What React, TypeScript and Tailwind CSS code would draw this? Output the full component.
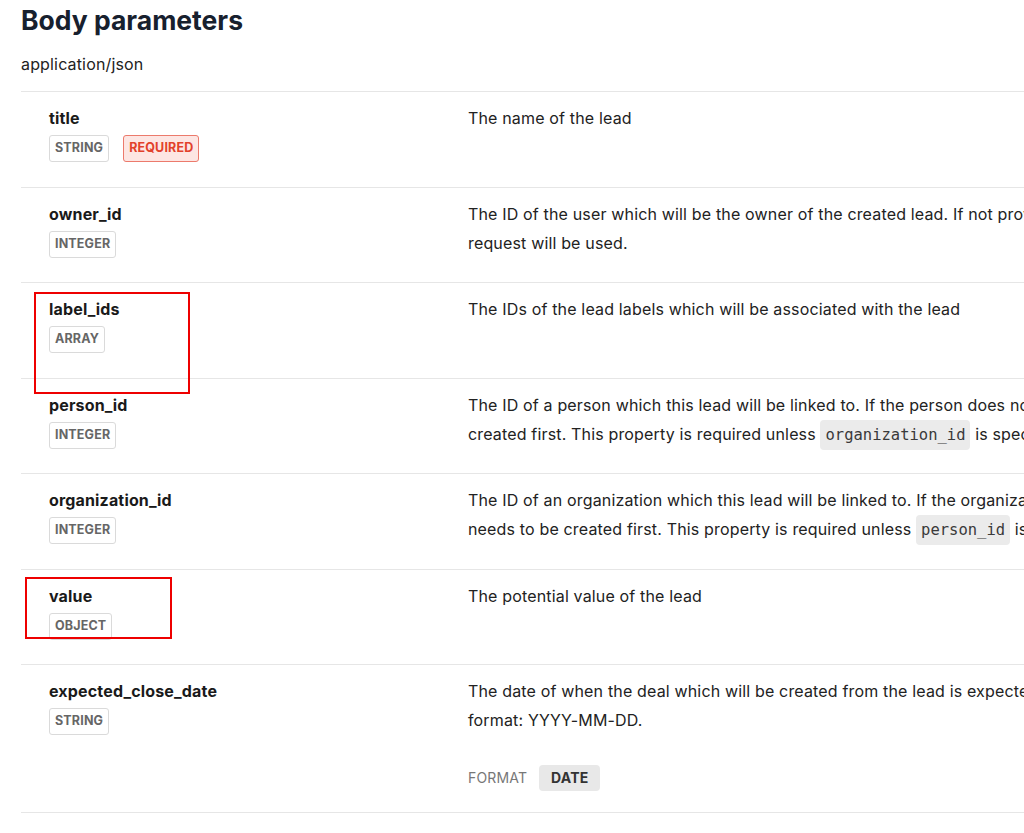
import React from "react";

type Param = {
  name: string;
  type: string;
  required?: boolean;
  description: React.ReactNode;
  format?: string;
};

const Code = ({ children }: { children: React.ReactNode }) => (
  <code className="rounded-[4px] bg-[#ebebeb] px-[5px] py-[6px] font-['DejaVu_Sans_Mono',monospace] text-[15.5px] leading-none tracking-normal text-[#3a3a3a]">
    {children}
  </code>
);

const PARAMS: Param[] = [
  { name: "title", type: "string", required: true, description: "The name of the lead" },
  {
    name: "owner_id",
    type: "integer",
    description:
      "The ID of the user which will be the owner of the created lead. If not provided, the user making the request will be used.",
  },
  {
    name: "label_ids",
    type: "array",
    description: "The IDs of the lead labels which will be associated with the lead",
  },
  {
    name: "person_id",
    type: "integer",
    description: (
      <>
        The ID of a person which this lead will be linked to. If the person does not exist yet, it needs to be
        created first. This property is required unless <Code>organization_id</Code> is specified.
      </>
    ),
  },
  {
    name: "organization_id",
    type: "integer",
    description: (
      <>
        The ID of an organization which this lead will be linked to. If the organization does not exist yet, it
        needs to be created first. This property is required unless <Code>person_id</Code> is specified.
      </>
    ),
  },
  { name: "value", type: "object", description: "The potential value of the lead" },
  {
    name: "expected_close_date",
    type: "string",
    description:
      "The date of when the deal which will be created from the lead is expected to be closed. In ISO 8601 format: YYYY-MM-DD.",
    format: "date",
  },
];

function Badge({ children, danger }: { children: React.ReactNode; danger?: boolean }) {
  return (
    <span
      className={
        danger
          ? "inline-flex h-[27px] items-center rounded-[3px] border border-[#ec7a6c] bg-[#fde6e3] px-[5px] text-[12.5px] font-bold uppercase text-[#e2412b]"
          : "inline-flex h-[27px] items-center rounded-[3px] border border-[#dadada] bg-white px-[5px] text-[12.5px] font-bold uppercase text-[#666]"
      }
    >
      {children}
    </span>
  );
}

export default function App() {
  return (
    <div className="relative h-[833px] w-[1024px] overflow-hidden bg-white font-['Inter',sans-serif] tracking-[0.16px] text-[#1c1c1c]">
      <div className="w-[1400px] pl-[21px]">
        <h2 className="pt-[4px] text-[26.5px] leading-[32px] font-bold tracking-normal text-[#17202e]">Body parameters</h2>
        <p className="mt-4 text-[16px] leading-[24px] text-[#222]">application/json</p>

        <div className="mt-[15px] border-b border-[#e6e6e6]">
          {PARAMS.map((p) => (
            <div key={p.name} className="flex border-t border-[#e6e6e6] pt-[12px] pb-[24.5px] pl-[28px]">
              <div className="w-[419px] shrink-0">
                <div className="text-[16px] leading-[28px] font-bold text-[#1a1a1a]">{p.name}</div>
                <div className="mt-[3px] flex gap-[14px]">
                  <Badge>{p.type}</Badge>
                  {p.required && <Badge danger>required</Badge>}
                </div>
              </div>
              <div className="w-[785px] text-[16px] leading-[29px] text-[#222]">
                <p>{p.description}</p>
                {p.format && (
                  <div className="mt-[28px] mb-[-5px] flex items-center gap-[12px]">
                    <span className="text-[14px] uppercase text-[#777]">format</span>
                    <span className="inline-flex h-[26px] items-center rounded-[4px] bg-[#e8e8e8] px-[12px] text-[14px] font-bold uppercase text-[#333]">
                      {p.format}
                    </span>
                  </div>
                )}
              </div>
            </div>
          ))}
        </div>
      </div>

      {/* annotation boxes drawn over the screenshot */}
      <div className="pointer-events-none absolute left-[34px] top-[292px] h-[102px] w-[156px] border-2 border-[#ee0000]" />
      <div className="pointer-events-none absolute left-[25px] top-[577px] h-[62px] w-[147px] border-2 border-[#ee0000]" />
    </div>
  );
}
